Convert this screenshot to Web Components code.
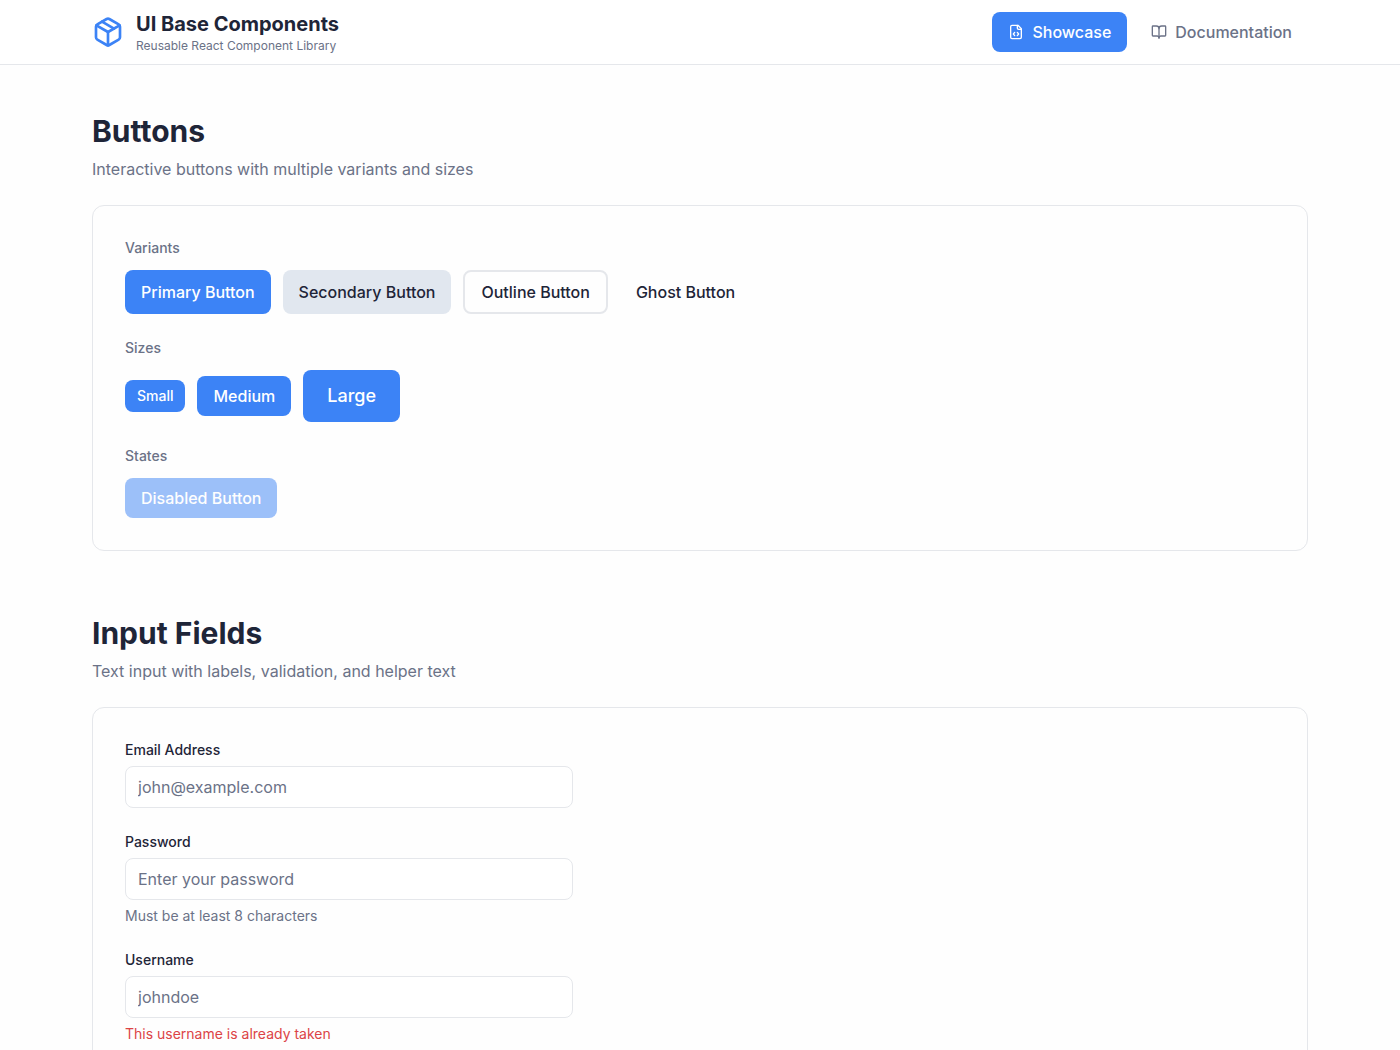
<!DOCTYPE html>
<html lang="en">
<head>
<meta charset="utf-8">
<title>UI Base Components</title>
<meta name="viewport" content="width=device-width, initial-scale=1">
<style>
:root {
  --primary: #3c83f6;
  --secondary: #e1e7ef;
  --text: #1e2538;
  --muted: #6b7287;
  --border: #e5e7eb;
  --danger: #dc4446;
  --surface: #ffffff;
}
body {
  margin: 0;
  background: #fefefe;
  color: var(--text);
  font-family: Inter, "Liberation Sans", sans-serif;
  font-size: 16px;
  line-height: 24px;
  font-variant-ligatures: none;
}
</style>
</head>
<body>
<showcase-page></showcase-page>
<script>
const define = (name, html, setup) => {
  const template = document.createElement('template');
  template.innerHTML = html;
  customElements.define(name, class extends HTMLElement {
    constructor() {
      super();
      this.attachShadow({ mode: 'open' }).append(template.content.cloneNode(true));
    }
    connectedCallback() {
      if (setup) setup(this, this.shadowRoot);
    }
  });
};

const icons = {
  package: '<path d="m7.5 4.27 9 5.15"/><path d="M21 8a2 2 0 0 0-1-1.73l-7-4a2 2 0 0 0-2 0l-7 4A2 2 0 0 0 3 8v8a2 2 0 0 0 1 1.73l7 4a2 2 0 0 0 2 0l7-4A2 2 0 0 0 21 16Z"/><path d="m3.3 7 8.7 5 8.7-5"/><path d="M12 22V12"/>',
  code: '<path d="M15 2H6a2 2 0 0 0-2 2v16a2 2 0 0 0 2 2h12a2 2 0 0 0 2-2V7Z"/><path d="M14 2v4a2 2 0 0 0 2 2h4"/><path d="m10 12.5-2 2.5 2 2.5"/><path d="m14 12.5 2 2.5-2 2.5"/>',
  book: '<path d="M12 7v14"/><path d="M3 18a1 1 0 0 1-1-1V4a1 1 0 0 1 1-1h5a4 4 0 0 1 4 4 4 4 0 0 1 4-4h5a1 1 0 0 1 1 1v13a1 1 0 0 1-1 1h-6a3 3 0 0 0-3 3 3 3 0 0 0-3-3z"/>'
};

define('ui-icon', `
<style>
:host { display: block; flex: none; width: var(--icon-size, 16px); height: var(--icon-size, 16px); }
svg { display: block; width: 100%; height: 100%; fill: none; stroke: currentColor; stroke-width: 2; stroke-linecap: round; stroke-linejoin: round; }
</style>
<svg viewBox="0 0 24 24" aria-hidden="true"></svg>`,
(host, root) => { root.querySelector('svg').innerHTML = icons[host.getAttribute('name')]; });

define('nav-link', `
<style>
:host { display: block; }
a { display: flex; align-items: center; gap: 8px; padding: 8px 16px; border-radius: 8px; color: var(--muted); font-weight: 500; text-decoration: none; }
:host([active]) a { background: var(--primary); color: #fff; }
</style>
<a href="#"><slot name="icon"></slot><slot></slot></a>`,
(host, root) => {
  root.querySelector('a').href = host.getAttribute('href');
  if (host.hasAttribute('active')) root.querySelector('a').setAttribute('aria-current', 'page');
});

define('app-header', `
<style>
:host { display: block; background: var(--surface); border-bottom: 1px solid var(--border); }
.inner { box-sizing: border-box; max-width: 1280px; margin: 0 auto; padding: 0 32px; min-height: 64px; display: flex; align-items: center; justify-content: space-between; }
.brand { display: flex; align-items: center; gap: 12px; }
.brand ui-icon { --icon-size: 32px; color: var(--primary); }
h1 { margin: 0; font-size: 20px; line-height: 28px; font-weight: 700; }
p { margin: 0; font-size: 12px; line-height: 16px; color: var(--muted); }
nav { display: flex; gap: 8px; }
</style>
<header class="inner">
  <div class="brand">
    <ui-icon name="package"></ui-icon>
    <div><h1>UI Base Components</h1><p>Reusable React Component Library</p></div>
  </div>
  <nav><slot></slot></nav>
</header>`);

define('ui-button', `
<style>
:host { display: flex; }
button { font: inherit; font-variant-ligatures: inherit; font-weight: 500; border: 0; border-radius: 8px; padding: 8px 16px; background: var(--primary); color: #fff; cursor: pointer; }
:host([variant="secondary"]) button { background: var(--secondary); color: var(--text); }
:host([variant="outline"]) button { background: transparent; border: 2px solid var(--border); color: var(--text); }
:host([variant="ghost"]) button { background: transparent; color: var(--text); }
:host([size="sm"]) button { padding: 6px 12px; font-size: 14px; line-height: 20px; }
:host([size="lg"]) button { padding: 12px 24px; font-size: 18px; line-height: 28px; }
button:disabled { opacity: .5; cursor: not-allowed; }
</style>
<button type="button"><slot></slot></button>`,
(host, root) => { root.querySelector('button').disabled = host.hasAttribute('disabled'); });

define('button-group', `
<style>
:host { display: block; }
h3 { margin: 0 0 12px; font-size: 14px; line-height: 20px; font-weight: 500; color: var(--muted); }
div { display: flex; flex-wrap: wrap; gap: 12px; }
:host([centered]) div { align-items: center; }
</style>
<h3></h3><div><slot></slot></div>`,
(host, root) => { root.querySelector('h3').textContent = host.getAttribute('label'); });

define('ui-input', `
<style>
:host { display: block; }
label { display: block; margin-bottom: 6px; font-size: 14px; line-height: 20px; font-weight: 500; }
input { display: block; box-sizing: border-box; width: 100%; font: inherit; padding: 8px 12px; border: 1px solid var(--border); border-radius: 8px; background: var(--surface); color: var(--text); }
input::placeholder { color: var(--muted); opacity: 1; }
p { margin: 6px 0 0; font-size: 14px; line-height: 20px; color: var(--muted); }
p:empty { display: none; }
:host([invalid]) p { color: var(--danger); }
</style>
<label for="field"></label>
<input id="field" aria-describedby="hint">
<p id="hint"></p>`,
(host, root) => {
  const input = root.querySelector('input');
  root.querySelector('label').textContent = host.getAttribute('label');
  input.type = host.getAttribute('type') || 'text';
  input.placeholder = host.getAttribute('placeholder');
  if (host.hasAttribute('invalid')) input.setAttribute('aria-invalid', 'true');
  root.querySelector('p').textContent = host.getAttribute('hint') || '';
});

define('field-stack', `
<style>
:host { display: flex; flex-direction: column; gap: 24px; max-width: 448px; }
</style>
<slot></slot>`);

define('demo-section', `
<style>
:host { display: block; }
h2 { margin: 0 0 8px; font-size: 30px; line-height: 36px; font-weight: 700; }
p { margin: 0 0 24px; color: var(--muted); }
.card { display: flex; flex-direction: column; gap: 24px; padding: 32px; border: 1px solid var(--border); border-radius: 12px; background: #fefefe; }
</style>
<section><h2></h2><p></p><div class="card"><slot></slot></div></section>`,
(host, root) => {
  root.querySelector('h2').textContent = host.getAttribute('heading');
  root.querySelector('p').textContent = host.getAttribute('description');
});

define('showcase-page', `
<style>
:host { display: block; }
main { box-sizing: border-box; max-width: 1280px; margin: 0 auto; padding: 48px 32px; display: flex; flex-direction: column; gap: 64px; }
</style>
<app-header>
  <nav-link href="#showcase" active><ui-icon slot="icon" name="code"></ui-icon>Showcase</nav-link>
  <nav-link href="#documentation"><ui-icon slot="icon" name="book"></ui-icon>Documentation</nav-link>
</app-header>
<main>
  <demo-section heading="Buttons" description="Interactive buttons with multiple variants and sizes">
    <button-group label="Variants">
      <ui-button>Primary Button</ui-button>
      <ui-button variant="secondary">Secondary Button</ui-button>
      <ui-button variant="outline">Outline Button</ui-button>
      <ui-button variant="ghost">Ghost Button</ui-button>
    </button-group>
    <button-group label="Sizes" centered>
      <ui-button size="sm">Small</ui-button>
      <ui-button>Medium</ui-button>
      <ui-button size="lg">Large</ui-button>
    </button-group>
    <button-group label="States">
      <ui-button disabled>Disabled Button</ui-button>
    </button-group>
  </demo-section>
  <demo-section heading="Input Fields" description="Text input with labels, validation, and helper text">
    <field-stack>
      <ui-input label="Email Address" type="email" placeholder="john@example.com"></ui-input>
      <ui-input label="Password" type="password" placeholder="Enter your password" hint="Must be at least 8 characters"></ui-input>
      <ui-input label="Username" placeholder="johndoe" hint="This username is already taken" invalid></ui-input>
    </field-stack>
  </demo-section>
</main>`);
</script>
</body>
</html>
